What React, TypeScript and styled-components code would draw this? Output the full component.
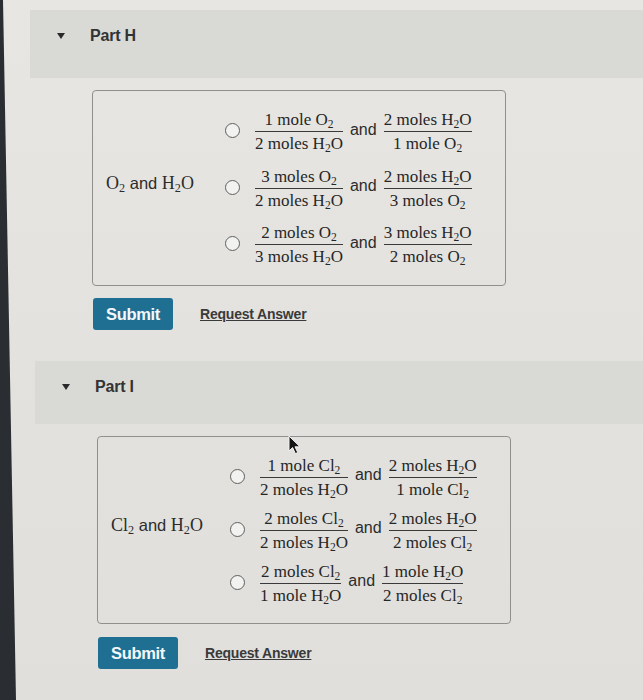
import React from 'react';
import styled, { createGlobalStyle } from 'styled-components';

type Option = { left: [string, string]; right: [string, string] };

type Part = {
  title: string;
  label: [string, string];
  options: Option[];
  shift: number;
  headerH: number;
  rowGap: number;
  padY: number;
  actionsTop: number;
};

const parts: Part[] = [
  {
    title: 'Part H',
    label: ['O2', 'H2O'],
    shift: 0,
    headerH: 68,
    rowGap: 11.5,
    padY: 18,
    actionsTop: 12,
    options: [
      { left: ['1 mole O2', '2 moles H2O'], right: ['2 moles H2O', '1 mole O2'] },
      { left: ['3 moles O2', '2 moles H2O'], right: ['2 moles H2O', '3 moles O2'] },
      { left: ['2 moles O2', '3 moles H2O'], right: ['3 moles H2O', '2 moles O2'] },
    ],
  },
  {
    title: 'Part I',
    label: ['Cl2', 'H2O'],
    shift: 5,
    headerH: 63,
    rowGap: 8,
    padY: 17.5,
    actionsTop: 13,
    options: [
      { left: ['1 mole Cl2', '2 moles H2O'], right: ['2 moles H2O', '1 mole Cl2'] },
      { left: ['2 moles Cl2', '2 moles H2O'], right: ['2 moles H2O', '2 moles Cl2'] },
      { left: ['2 moles Cl2', '1 mole H2O'], right: ['1 mole H2O', '2 moles Cl2'] },
    ],
  },
];

const GlobalStyle = createGlobalStyle`
  html, body {
    margin: 0;
    background: #e3e2de;
  }
  body {
    font-family: 'Liberation Sans', Arial, sans-serif;
    color: #2c2c2c;
  }
`;

const Page = styled.div`
  display: flex;
  width: 643px;
  height: 700px;
  overflow: hidden;
  background: linear-gradient(180deg, #e7e6e3 0%, #e2e1dd 60%, #e0dfdb 100%);
`;

// dark bezel edge on the left
const Edge = styled.div`
  flex: 0 0 16px;
  background: #2a2d31;
  clip-path: polygon(0 0, 3px 0, 16px 100%, 0 100%);
`;

const Main = styled.main`
  flex: 1;
  display: flex;
  flex-direction: column;
  padding-top: 10px;
`;

const Section = styled.section<{ $shift: number }>`
  display: flex;
  flex-direction: column;
  margin-left: ${(p) => 14 + p.$shift}px;
  & + & {
    margin-top: 31px;
  }
`;

const Header = styled.div<{ $h: number }>`
  display: flex;
  align-items: flex-start;
  gap: 25px;
  height: ${(p) => p.$h}px;
  box-sizing: border-box;
  padding: 17px 0 0 27px;
  background: #d9d9d6;
`;

const Caret = styled.span`
  width: 0;
  height: 0;
  margin-top: 6px;
  border-left: 4.5px solid transparent;
  border-right: 4.5px solid transparent;
  border-top: 6px solid #2a2a2a;
`;

const Title = styled.h2`
  margin: 0;
  font-size: 16px;
  line-height: 18px;
  font-weight: 700;
  color: #333;
  letter-spacing: -0.2px;
`;

const Box = styled.div<{ $padY: number }>`
  position: relative;
  display: flex;
  align-items: center;
  width: 414px;
  box-sizing: border-box;
  margin: 12px 0 0 62px;
  padding: ${(p) => p.$padY}px 0 ${(p) => p.$padY}px 13px;
  border: 1px solid #8f8f8d;
  border-radius: 4px;
`;

const Label = styled.div`
  flex: 0 0 119px;
  font-size: 16.5px;
  margin-top: -10px;
`;

const Serif = styled.span`
  font-family: 'Liberation Serif', 'Times New Roman', serif;
  font-size: 18px;
`;

const Sub = styled.sub`
  font-size: 0.68em;
  vertical-align: -0.25em;
  line-height: 0;
`;

const Options = styled.div<{ $gap: number }>`
  display: flex;
  flex-direction: column;
  gap: ${(p) => p.$gap}px;
`;

const Row = styled.label`
  display: flex;
  align-items: center;
`;

const Radio = styled.span`
  width: 15px;
  height: 15px;
  box-sizing: border-box;
  border: 1.5px solid #5f5f5f;
  border-radius: 50%;
  background: #f2f2f0;
  margin-right: 15px;
  margin-top: -2px;
`;

const Fraction = styled.span`
  display: inline-flex;
  flex-direction: column;
  align-items: center;
  font-family: 'Liberation Serif', 'Times New Roman', serif;
  font-size: 17px;
  line-height: 21px;
  color: #262626;
`;

const Bar = styled.span`
  align-self: stretch;
  height: 1px;
  margin: 1px 0;
  background: #3a3a3a;
`;

const And = styled.span`
  margin: -4px 7px 0;
  font-size: 16px;
`;

const Actions = styled.div<{ $top: number }>`
  display: flex;
  align-items: center;
  gap: 27px;
  margin: ${(p) => p.$top}px 0 0 63px;
`;

const SubmitButton = styled.button`
  width: 80px;
  height: 32px;
  border: none;
  border-radius: 3px;
  background: #1f6f93;
  color: #f4f8fa;
  font-family: 'Liberation Sans', Arial, sans-serif;
  font-size: 16.5px;
  font-weight: 700;
  letter-spacing: -0.3px;
`;

const RequestLink = styled.a`
  font-size: 14px;
  font-weight: 700;
  color: #3a3a3a;
  text-decoration: underline;
  letter-spacing: -0.2px;
`;

const Pointer = styled.svg`
  position: absolute;
  left: 190px;
  top: -2px;
`;

const chem = (text: string) =>
  text.split(/(?<=[A-Za-z])(\d)/).map((bit, i) =>
    i % 2 === 1 ? <Sub key={i}>{bit}</Sub> : <React.Fragment key={i}>{bit}</React.Fragment>
  );

const Frac = ({ top, bottom }: { top: string; bottom: string }) => (
  <Fraction>
    <span>{chem(top)}</span>
    <Bar />
    <span>{chem(bottom)}</span>
  </Fraction>
);

const PartBlock = ({ part, pointer }: { part: Part; pointer?: boolean }) => (
  <Section $shift={part.shift}>
    <Header $h={part.headerH}>
      <Caret />
      <Title>{part.title}</Title>
    </Header>
    <Box $padY={part.padY}>
      <Label>
        <Serif>{chem(part.label[0])}</Serif> and <Serif>{chem(part.label[1])}</Serif>
      </Label>
      <Options $gap={part.rowGap}>
        {part.options.map((o, i) => (
          <Row key={i}>
            <Radio />
            <Frac top={o.left[0]} bottom={o.left[1]} />
            <And>and</And>
            <Frac top={o.right[0]} bottom={o.right[1]} />
          </Row>
        ))}
      </Options>
      {pointer && (
        <Pointer width="14" height="20" viewBox="0 0 14 20">
          <path d="M1 1 L1 16 L4.6 12.6 L7.4 18.6 L9.8 17.6 L7 11.8 L12 11.8 Z" fill="#151515" stroke="#f2f2f2" strokeWidth="1" />
        </Pointer>
      )}
    </Box>
    <Actions $top={part.actionsTop}>
      <SubmitButton>Submit</SubmitButton>
      <RequestLink>Request Answer</RequestLink>
    </Actions>
  </Section>
);

export default function App() {
  return (
    <>
      <GlobalStyle />
      <Page>
        <Edge />
        <Main>
          {parts.map((p, i) => (
            <PartBlock key={p.title} part={p} pointer={i === 1} />
          ))}
        </Main>
      </Page>
    </>
  );
}
